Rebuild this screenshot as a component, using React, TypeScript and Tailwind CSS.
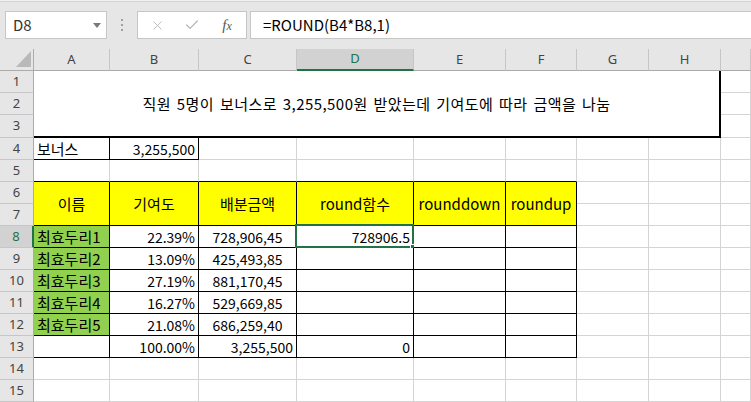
import { Check, X } from "lucide-react";

const COLS = ["A", "B", "C", "D", "E", "F", "G", "H", ""];

type Cell = {
  text?: string;
  align?: "left" | "right" | "center";
  bg?: string;
  line?: string;
  span?: string;
  num?: boolean;
  wide?: boolean;
  selected?: boolean;
};

const GRID = "border-r border-b border-[#d4d4d4]";
const BOX = "border-r border-b border-black";
const TOP = "border-r border-b border-r-[#d4d4d4] border-b-black";

function gridRow(n: number): Cell[] {
  return Array.from({ length: n }, () => ({ line: GRID }));
}

const people = [
  ["최효두리1", "22.39%", "728,906,45", "728906.5"],
  ["최효두리2", "13.09%", "425,493,85", ""],
  ["최효두리3", "27.19%", "881,170,45", ""],
  ["최효두리4", "16.27%", "529,669,85", ""],
  ["최효두리5", "21.08%", "686,259,40", ""],
];

const heads = ["이름", "기여도", "배분금액", "round함수", "rounddown", "roundup"];

// rows keyed by the row number shown in the header
const rows: Record<number, Cell[]> = {
  1: [
    {
      text: "직원 5명이 보너스로 3,255,500원 받았는데 기여도에 따라 금액을 나눔",
      align: "center",
      wide: true,
      span: "col-span-8 row-span-3",
      line: "border-r-2 border-b-2 border-black",
    },
    { line: GRID },
  ],
  2: [{ line: GRID }],
  3: [{ line: GRID }],
  4: [
    { text: "보너스", line: BOX },
    { text: "3,255,500", align: "right", num: true, line: BOX },
    ...gridRow(7),
  ],
  5: [...Array.from({ length: 6 }, () => ({ line: TOP })), ...gridRow(3)],
  6: [
    ...heads.map((h) => ({
      text: h,
      align: "center" as const,
      bg: "bg-[#ffff00]",
      span: "row-span-2",
      line: BOX,
    })),
    ...gridRow(3),
  ],
  7: gridRow(3),
  13: [
    { line: BOX },
    { text: "100.00%", align: "right", num: true, line: BOX },
    { text: "3,255,500", align: "right", num: true, line: BOX },
    { text: "0", align: "right", num: true, line: BOX },
    { line: BOX },
    { line: BOX },
    ...gridRow(3),
  ],
  14: gridRow(9),
  15: gridRow(9),
};

people.forEach(([name, pct, amt, rnd], i) => {
  rows[8 + i] = [
    { text: name, bg: "bg-[#92d050]", line: BOX },
    { text: pct, align: "right", num: true, line: BOX },
    { text: amt, align: "center", num: true, line: BOX },
    { text: rnd, align: "right", num: true, line: BOX, selected: i === 0 },
    { line: BOX },
    { line: BOX },
    ...gridRow(3),
  ];
});

function SheetCell({ c }: { c: Cell }) {
  return (
    <div
      className={`relative flex items-center overflow-visible whitespace-nowrap text-black ${c.line ?? GRID} ${c.bg ?? "bg-white"} ${c.span ?? ""} ${
        c.align === "right" ? "justify-end pr-[3px]" : c.align === "center" ? "justify-center" : "justify-start pl-[3px]"
      } ${c.num ? "text-[14px]" : "text-[15px]"}`}
    >
      {c.text && (
        <span className={c.wide ? "leading-none tracking-[0.45px] [word-spacing:2px]" : "leading-none"}>{c.text}</span>
      )}
      {c.selected && (
        <>
          <div className="pointer-events-none absolute -top-[2px] -left-[2px] -right-[1px] -bottom-[1px] border-2 border-[#217346]" />
          <div className="absolute -right-[3px] -bottom-[3px] h-[6px] w-[6px] border border-white bg-[#217346]" />
        </>
      )}
    </div>
  );
}

function FormulaBar() {
  return (
    <div className="relative h-[49px] shrink-0 bg-[#e6e6e6]">
      <div className="h-px bg-[#f0f0f0]" />
      <div className="h-px bg-[#d4d4d4]" />
      <div className="flex pt-[9px] pl-[5px]">
        <div className="flex h-[28px] w-[102px] items-center justify-between border border-[#c6c6c6] bg-white pl-[7px] pr-[5px]">
          <span className="text-[15px] text-[#333]">D8</span>
          <svg width="8" height="5" viewBox="0 0 8 5">
            <path d="M0 0h8L4 5z" fill="#7a7a7a" />
          </svg>
        </div>
        <div className="flex w-[30px] flex-col items-center justify-center gap-[3px]">
          <span className="h-[2px] w-[2px] bg-[#a0a0a0]" />
          <span className="h-[2px] w-[2px] bg-[#a0a0a0]" />
          <span className="h-[2px] w-[2px] bg-[#a0a0a0]" />
        </div>
        <div className="flex h-[28px] w-[110px] items-center border border-[#c6c6c6] bg-white">
          <div className="flex w-[36px] justify-center pl-[2px]">
            <X className="size-[15px] text-[#b4b4b4]" strokeWidth={1.4} />
          </div>
          <div className="flex w-[36px] justify-center">
            <Check className="size-[16px] text-[#b4b4b4]" strokeWidth={1.8} />
          </div>
          <div className="flex w-[34px] justify-center font-['Liberation_Serif',serif] text-[15px] italic text-[#555]">
            <span>f</span>
            <span className="mt-[3px] text-[12px]">x</span>
          </div>
        </div>
        <div className="ml-[3px] flex h-[28px] flex-1 items-center border border-r-0 border-[#c6c6c6] bg-white pl-[12px]">
          <span className="text-[15px] text-black">=ROUND(B4*B8,1)</span>
        </div>
      </div>
    </div>
  );
}

export default function App() {
  const rowNums = Array.from({ length: 15 }, (_, i) => i + 1);
  return (
    <div className="flex h-[402px] w-[751px] flex-col overflow-hidden bg-white font-['Noto_Sans_CJK_KR',sans-serif]">
      <FormulaBar />
      <div className="grid grid-cols-[34px_76px_89px_98px_117px_92px_71px_72px_72px_1fr] grid-rows-[22px_22px_22px_23px_repeat(12,22px)]">
        {/* corner */}
        <div className="relative border-r border-b border-r-[#ababab] border-b-[#ababab] bg-[#e6e6e6]">
          <svg className="absolute right-[2px] bottom-[3px]" width="15" height="16" viewBox="0 0 15 16">
            <path d="M15 0V16H0z" fill="#b9b9b9" />
          </svg>
        </div>
        {COLS.map((c) => (
          <div
            key={c || "I"}
            className={`flex items-center justify-center border-r font-['Noto_Sans',sans-serif] text-[13px] ${
              c === "D"
                ? "border-b-2 border-r-[#c6c6c6] border-b-[#217346] bg-[#d2d2d2] text-[#217346]"
                : "border-b border-r-[#c6c6c6] border-b-[#ababab] bg-[#e6e6e6] text-[#444]"
            }`}
          >
            {c}
          </div>
        ))}
        {rowNums.map((r) => (
          <RowCells key={r} r={r} />
        ))}
      </div>
    </div>
  );
}

function RowCells({ r }: { r: number }) {
  const sel = r === 8;
  return (
    <>
      <div
        className={`flex items-center justify-center border-b border-b-[#c6c6c6] font-['Noto_Sans',sans-serif] text-[13px] ${
          sel
            ? "border-r-2 border-r-[#217346] bg-[#d2d2d2] text-[#217346]"
            : "border-r border-r-[#ababab] bg-[#e6e6e6] text-[#444]"
        }`}
      >
        {r}
      </div>
      {(rows[r] ?? []).map((c, i) => (
        <SheetCell key={i} c={c} />
      ))}
    </>
  );
}
